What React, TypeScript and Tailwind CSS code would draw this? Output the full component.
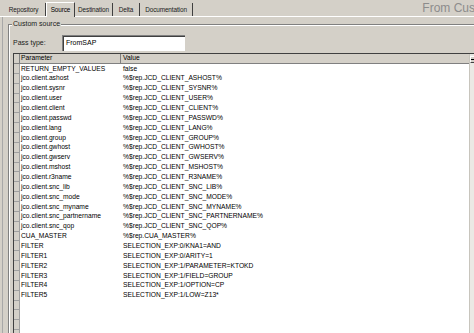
import React from 'react';

const rows: [string, string][] = [
  ['RETURN_EMPTY_VALUES', 'false'],
  ['jco.client.ashost', '%$rep.JCD_CLIENT_ASHOST%'],
  ['jco.client.sysnr', '%$rep.JCD_CLIENT_SYSNR%'],
  ['jco.client.user', '%$rep.JCD_CLIENT_USER%'],
  ['jco.client.client', '%$rep.JCD_CLIENT_CLIENT%'],
  ['jco.client.passwd', '%$rep.JCD_CLIENT_PASSWD%'],
  ['jco.client.lang', '%$rep.JCD_CLIENT_LANG%'],
  ['jco.client.group', '%$rep.JCD_CLIENT_GROUP%'],
  ['jco.client.gwhost', '%$rep.JCD_CLIENT_GWHOST%'],
  ['jco.client.gwserv', '%$rep.JCD_CLIENT_GWSERV%'],
  ['jco.client.mshost', '%$rep.JCD_CLIENT_MSHOST%'],
  ['jco.client.r3name', '%$rep.JCD_CLIENT_R3NAME%'],
  ['jco.client.snc_lib', '%$rep.JCD_CLIENT_SNC_LIB%'],
  ['jco.client.snc_mode', '%$rep.JCD_CLIENT_SNC_MODE%'],
  ['jco.client.snc_myname', '%$rep.JCD_CLIENT_SNC_MYNAME%'],
  ['jco.client.snc_partnername', '%$rep.JCD_CLIENT_SNC_PARTNERNAME%'],
  ['jco.client.snc_qop', '%$rep.JCD_CLIENT_SNC_QOP%'],
  ['CUA_MASTER', '%$rep.CUA_MASTER%'],
  ['FILTER', 'SELECTION_EXP:0/KNA1=AND'],
  ['FILTER1', 'SELECTION_EXP:0/ARITY=1'],
  ['FILTER2', 'SELECTION_EXP:1/PARAMETER=KTOKD'],
  ['FILTER3', 'SELECTION_EXP:1/FIELD=GROUP'],
  ['FILTER4', 'SELECTION_EXP:1/OPTION=CP'],
  ['FILTER5', 'SELECTION_EXP:1/LOW=Z13*'],
  ['', ''],
  ['', ''],
  ['', ''],
  ['', ''],
];

const tabs = [
  { label: 'Repository', w: 'w-[44px]' },
  { label: 'Source', w: 'w-[29px]', active: true },
  { label: 'Destination', w: 'w-[38px]' },
  { label: 'Delta', w: 'w-[27px]' },
  { label: 'Documentation', w: 'w-[53px]' },
];

export default function App() {
  return (
    <div className="w-[474px] h-[333px] overflow-hidden bg-[#d4d0c8] text-black font-['Liberation_Sans',Arial,sans-serif] flex flex-col">
      {/* tab strip */}
      <div className="h-[17px] shrink-0 flex items-end border-b border-white pl-[2px]">
        {tabs.map((t) =>
          t.active ? (
            <div
              key={t.label}
              className={`${t.w} shrink-0 h-[15px] -mb-px bg-[#d4d0c8] border-t border-l border-white border-r border-r-[#404040] flex items-center justify-center whitespace-nowrap text-[6.4px] tracking-[-0.1px]`}
            >
              {t.label}
            </div>
          ) : (
            <div
              key={t.label}
              className={`${t.w} shrink-0 h-[13px] border-r border-[#404040] flex items-center justify-center whitespace-nowrap text-[6.4px] tracking-[-0.1px] text-[#202020]`}
            >
              {t.label}
            </div>
          )
        )}
        <div className="self-start mt-[1px] ml-auto mr-[-1px] whitespace-nowrap text-[12px] leading-[14px] text-[#8c8c8c]">
          From Cus
        </div>
      </div>

      {/* tab page */}
      <div className="flex-1 min-h-0 ml-[2px] border-l border-[#a8a8a8] flex flex-col pt-[7px] pl-[5px]">
        <div className="relative flex-1 min-h-0 flex flex-col border-t border-l border-[#808080] shadow-[inset_1px_1px_0_#ffffff] pt-[10px] pl-[4px]">
          <span className="absolute -top-[6px] left-[3px] px-[1px] bg-[#d4d0c8] text-[7px] leading-[10px] text-[#202020]">
            Custom source
          </span>

          <div className="flex items-center h-[16px]">
            <span className="w-[49px] text-[7px] text-[#202020]">Pass type:</span>
            <div className="w-[123px] h-[16px] bg-white border-t border-l border-[#808080] shadow-[inset_1px_1px_0_#404040] flex items-center pl-[3px] text-[7px]">
              FromSAP
            </div>
          </div>

          {/* table */}
          <div className="mt-[2px] flex-1 min-h-0 flex border-t border-l border-[#404040] bg-white text-[6.7px] leading-none">
            <div className="flex-1 min-w-0 flex flex-col">
              <div className="h-[10px] shrink-0 flex bg-[#d4d0c8] border-b border-[#808080]">
                <div className="w-[6px] border-r border-[#808080]" />
                <div className="w-[101px] border-r border-[#808080] pl-[1px] flex items-center">Parameter</div>
                <div className="flex-1 pl-[2px] flex items-center">Value</div>
              </div>
              {rows.map(([p, v], i) => (
                <div key={i} className="h-[9.87px] shrink-0 flex">
                  <div className="w-[6px] bg-[#d4d0c8] border-r border-b border-[#a0a0a0]" />
                  <div className="w-[101px] pl-[1px] flex items-center whitespace-nowrap overflow-hidden">{p}</div>
                  <div className="flex-1 pl-[2px] flex items-center whitespace-nowrap overflow-hidden">{v}</div>
                </div>
              ))}
            </div>
            {/* scrollbar */}
            <div className="w-[5px] shrink-0 flex flex-col bg-[#ebe9e4] border-l border-[#c8c5bd]">
              <div className="h-[2px]" />
              <div className="h-[7px] bg-[#d4d0c8] border-t border-l border-white border-b border-b-[#404040] flex items-center justify-end">
                <div className="w-[3px] h-px bg-black" />
              </div>
            </div>
          </div>
        </div>
      </div>
    </div>
  );
}
